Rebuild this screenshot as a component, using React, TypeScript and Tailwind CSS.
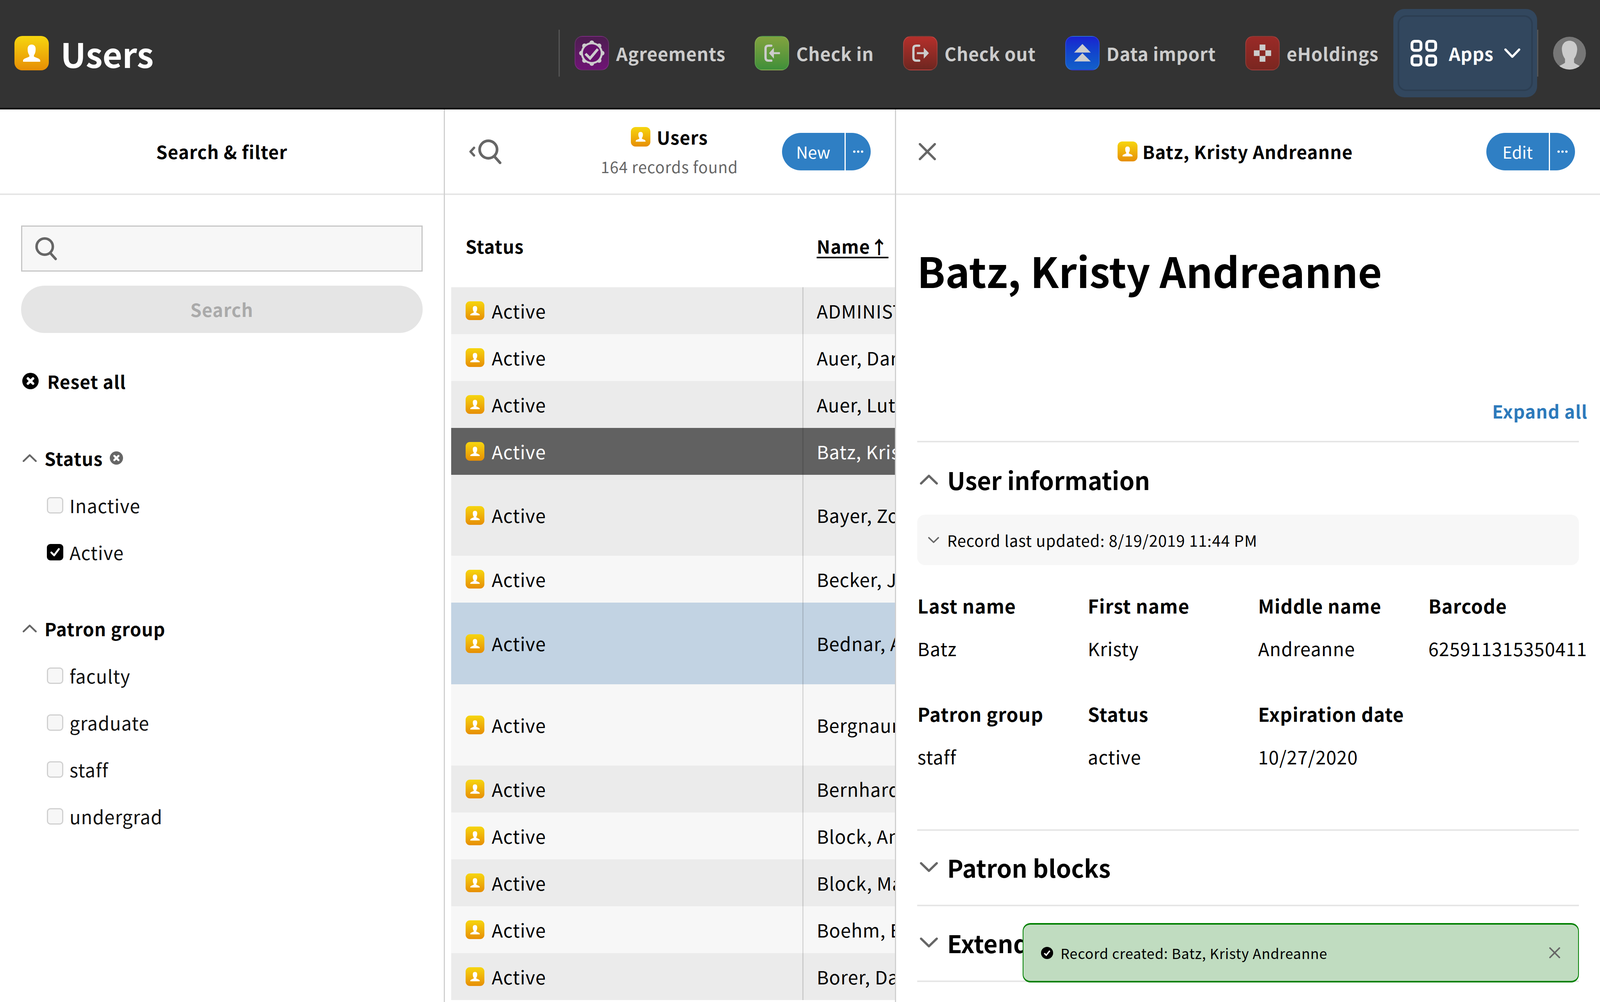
import type { ReactNode } from "react";

const rows = [
  { name: "ADMINISTRATOR, Diku", h: "h-[120px]", bg: "bg-[#ebebeb]" },
  { name: "Auer, Darian", h: "h-[120px]", bg: "bg-[#f7f7f7]" },
  { name: "Auer, Lutz", h: "h-[120px]", bg: "bg-[#ebebeb]" },
  { name: "Batz, Kristy Andreanne", h: "h-[120px]", bg: "bg-[#616161]", dark: true },
  { name: "Bayer, Zoe", h: "h-[207px]", bg: "bg-[#ebebeb]" },
  { name: "Becker, Jena", h: "h-[120px]", bg: "bg-[#f7f7f7]" },
  { name: "Bednar, Amy", h: "h-[209px]", bg: "bg-[#c2d3e3]" },
  { name: "Bergnaum, Lia", h: "h-[208px]", bg: "bg-[#f7f7f7]" },
  { name: "Bernhard, Ivy", h: "h-[120px]", bg: "bg-[#ebebeb]" },
  { name: "Block, Anna", h: "h-[120px]", bg: "bg-[#f7f7f7]" },
  { name: "Block, Mary", h: "h-[120px]", bg: "bg-[#ebebeb]" },
  { name: "Boehm, Eve", h: "h-[120px]", bg: "bg-[#f7f7f7]" },
  { name: "Borer, Dale", h: "h-[120px]", bg: "bg-[#ebebeb]" },
];

function AppTile({ className, children }: { className: string; children: ReactNode }) {
  return (
    <div className={`h-[88px] w-[88px] shrink-0 overflow-hidden rounded-[20px] border-2 border-white/10 ${className}`}>
      <svg viewBox="3 3 114 114" className="h-full w-full">
        {children}
      </svg>
    </div>
  );
}

function UserIcon({ size = "h-[48px] w-[48px] rounded-[11px]" }: { size?: string }) {
  return (
    <div className={`shrink-0 bg-linear-to-b from-[#f6d60f] to-[#e68e05] ${size}`}>
      <svg viewBox="0 0 120 120" className="h-full w-full">
        <path
          d="M60 30C50 30 46 37 46 46C46 55 48 62 52 67L52 72C46 76 32 78 30 85L30 90L90 90L90 85C88 78 74 76 68 72L68 67C72 62 74 55 74 46C74 37 70 30 60 30Z"
          fill="#fff"
        />
      </svg>
    </div>
  );
}

function SearchGlyph({ className }: { className: string }) {
  return (
    <svg viewBox="0 0 78 82" className={className} fill="none" stroke="#666" strokeWidth="9" strokeLinecap="round">
      <circle cx="34" cy="34" r="29" />
      <path d="M54 57L73 78" />
    </svg>
  );
}

function Chevron({ up, className }: { up?: boolean; className: string }) {
  return (
    <svg viewBox="0 0 64 36" className={className} fill="none" stroke="#666" strokeWidth="8" strokeLinecap="round" strokeLinejoin="round">
      <path d={up ? "M4 32L32 5L60 32" : "M4 4L32 31L60 4"} />
    </svg>
  );
}

function CloseGlyph({ className }: { className: string }) {
  return (
    <svg viewBox="0 0 60 60" className={className} fill="none" stroke="#666" strokeWidth="8" strokeLinecap="round">
      <path d="M4 4L56 56M56 4L4 56" />
    </svg>
  );
}

function ClearCircle({ className, color }: { className: string; color: string }) {
  return (
    <svg viewBox="0 0 58 58" className={className}>
      <circle cx="29" cy="29" r="29" fill={color} />
      <path d="M20 20L38 38M38 20L20 38" stroke="#fff" strokeWidth="9" strokeLinecap="round" />
    </svg>
  );
}

function Checkbox({ label, checked }: { label: string; checked?: boolean }) {
  return (
    <div className="flex h-[120px] items-center pl-[120px]">
      {checked ? (
        <div className="flex h-[42px] w-[42px] items-center justify-center rounded-[9px] bg-black">
          <svg viewBox="0 0 40 40" className="h-[32px] w-[32px]" fill="none" stroke="#fff" strokeWidth="6" strokeLinecap="round" strokeLinejoin="round">
            <path d="M8 21L17 30L32 10" />
          </svg>
        </div>
      ) : (
        <div className="h-[42px] w-[42px] rounded-[9px] border-[3px] border-[#d0d0d0] bg-[#f7f7f7]" />
      )}
      <span className="ml-[16px] text-[47px] tracking-[1px] text-[#111]">{label}</span>
    </div>
  );
}

function SplitButton({ label }: { label: string }) {
  return (
    <div className="flex h-[96px] shrink-0 text-white">
      <div className="flex w-[160px] items-center justify-center rounded-l-[48px] bg-[#2f7fc4] text-[42px]">{label}</div>
      <div className="ml-[3px] flex w-[64px] items-center justify-center gap-[4px] rounded-r-[48px] bg-[#2f7fc4]">
        <i className="h-[6px] w-[6px] rounded-full bg-white" />
        <i className="h-[6px] w-[6px] rounded-full bg-white" />
        <i className="h-[6px] w-[6px] rounded-full bg-white" />
      </div>
    </div>
  );
}

function NavItem({ tile, label }: { tile: ReactNode; label: string }) {
  return (
    <div className="flex items-center gap-[18px]">
      {tile}
      <span className="text-[46px] font-bold tracking-[.8px] text-[#cccccc]">{label}</span>
    </div>
  );
}

function Field({ label, value }: { label: string; value: string }) {
  return (
    <div>
      <div className="text-[48px] leading-[80px] font-bold tracking-[1px]">{label}</div>
      <div className="mt-[30px] text-[47px] leading-[80px] tracking-[1px]">{value}</div>
    </div>
  );
}

function Accordion({ title, open }: { title: string; open?: boolean }) {
  return (
    <div className="flex h-[96px] items-center pl-[7px]">
      <Chevron up={open} className="h-[32px] w-[46px]" />
      <span className="ml-[24px] text-[62px] font-bold">{title}</span>
    </div>
  );
}

export default function App() {
  return (
    <div className="flex h-[2564px] w-full flex-col overflow-hidden bg-white font-['Noto_Sans_CJK_SC','Noto_Sans',sans-serif] text-black">
      <header className="flex h-[280px] shrink-0 items-center border-b-4 border-black bg-[#333333] pr-[36px] pb-[4px] pl-[37px]">
        <UserIcon size="h-[88px] w-[88px] rounded-[20px]" />
        <span className="ml-[30px] text-[87px] font-bold text-white">Users</span>
        <div className="ml-auto flex items-center">
          <div className="h-[120px] w-[3px] bg-[#555]" />
          <div className="ml-[38px] flex items-center gap-[75px]">
            <NavItem
              label="Agreements"
              tile={
                <AppTile className="bg-linear-to-b from-[#4d1c50] to-[#6f1375]">
                  <circle cx="60" cy="60" r="38" fill="#ccc" />
                  {[0, 45, 90, 135, 180, 225, 270, 315].map((a) => (
                    <circle
                      key={a}
                      cx={60 + 36 * Math.cos((a * Math.PI) / 180)}
                      cy={60 + 36 * Math.sin((a * Math.PI) / 180)}
                      r="8"
                      fill="#ccc"
                    />
                  ))}
                  <circle cx="60" cy="60" r="31" fill="#66116c" />
                  <path d="M38 62L54 78L81 46" fill="none" stroke="#ccc" strokeWidth="9" />
                </AppTile>
              }
            />
            <NavItem
              label="Check in"
              tile={
                <AppTile className="bg-linear-to-b from-[#81a33f] to-[#3e8f39]">
                  <path d="M58 34L48 34Q38 34 38 44L38 76Q38 86 48 86L58 86" fill="none" stroke="#ccc" strokeWidth="8" strokeLinecap="round" />
                  <path d="M50 60L67 41L67 79Z" fill="#ccc" />
                  <path d="M65 60L88 60" stroke="#ccc" strokeWidth="7" />
                </AppTile>
              }
            />
            <NavItem
              label="Check out"
              tile={
                <AppTile className="bg-linear-to-b from-[#b52f2b] to-[#6e2620]">
                  <path d="M56 34L46 34Q36 34 36 44L36 76Q36 86 46 86L56 86" fill="none" stroke="#ccc" strokeWidth="8" strokeLinecap="round" />
                  <path d="M90 60L72 41L72 79Z" fill="#ccc" />
                  <path d="M48 60L74 60" stroke="#ccc" strokeWidth="7" />
                </AppTile>
              }
            />
            <NavItem
              label="Data import"
              tile={
                <AppTile className="bg-linear-to-b from-[#1a1fd0] to-[#1560c8]">
                  <path d="M60 28L89 58L31 58Z" fill="#ccc" />
                  <path d="M60 60L89 89L31 89Z" fill="#ccc" />
                </AppTile>
              }
            />
            <NavItem
              label="eHoldings"
              tile={
                <AppTile className="bg-linear-to-b from-[#9a2a27] to-[#7a2620]">
                  <path d="M50 30H70V50H90V70H70V90H50V70H30V50H50ZM50 50V70H70V50Z" fill="#ccc" fillRule="evenodd" />
                </AppTile>
              }
            />
          </div>
          <div className="ml-[38px] flex h-[226px] w-[368px] items-center rounded-[28px] bg-[#32475e] px-[11px] py-[16px]">
            <div className="flex h-full w-full items-center rounded-[22px] border-4 border-[#2c3e52] pl-[29px]">
              <svg viewBox="0 0 94 94" className="h-[68px] w-[68px]" fill="none" stroke="#fff" strokeWidth="10">
                <rect x="5" y="5" width="32" height="32" rx="9" />
                <rect x="57" y="5" width="32" height="32" rx="9" />
                <rect x="5" y="57" width="32" height="32" rx="9" />
                <rect x="57" y="57" width="32" height="32" rx="9" />
              </svg>
              <span className="ml-[30px] text-[46px] font-bold tracking-[.8px] text-white">Apps</span>
              <svg viewBox="0 0 58 34" className="ml-[28px] h-[24px] w-[41px]" fill="none" stroke="#fff" strokeWidth="8" strokeLinecap="round" strokeLinejoin="round">
                <path d="M4 4L29 30L54 4" />
              </svg>
            </div>
          </div>
          <div className="h-[120px] w-[3px] bg-[#555]" />
          <svg viewBox="0 0 116 116" className="ml-[38px] h-[84px] w-[84px]">
            <defs>
              <clipPath id="avatar">
                <circle cx="58" cy="58" r="58" />
              </clipPath>
            </defs>
            <circle cx="58" cy="58" r="58" fill="#777" />
            <path
              clipPath="url(#avatar)"
              d="M58 14C40 14 30 28 31 46C32 60 36 70 42 78L42 92C32 100 12 104 10 120L106 120C104 104 84 100 74 92L74 78C80 70 84 60 85 46C86 28 76 14 58 14Z"
              fill="#cbcbcb"
            />
          </svg>
        </div>
      </header>

      <main className="flex min-h-0 flex-1">
        <section className="w-[27.8%] shrink-0 border-r-[3px] border-[#d0d0d0]">
          <div className="flex h-[219px] items-center justify-center border-b-4 border-[#e6e6e6] text-[46px] font-bold tracking-[1px]">
            Search &amp; filter
          </div>
          <div className="px-[54px] pt-[78px]">
            <div className="flex h-[118px] items-center border-[3px] border-[#c6c6c6] bg-[#f7f7f7] pl-[33px]">
              <SearchGlyph className="h-[60px] w-[56px]" />
            </div>
            <div className="mt-[36px] flex h-[121px] items-center justify-center rounded-[60px] bg-[#e5e5e5] text-[46px] font-bold tracking-[1px] text-[#aaaaaa]">
              Search
            </div>
            <div className="mt-[93px] flex h-[60px] items-center pl-[3px]">
              <ClearCircle className="h-[42px] w-[42px]" color="#000" />
              <span className="ml-[22px] text-[46px] font-bold tracking-[1px]">Reset all</span>
            </div>
          </div>
          <div className="mt-[132px] flex h-[70px] items-center pl-[58px]">
            <Chevron up className="h-[22px] w-[36px]" />
            <span className="ml-[20px] text-[46px] font-bold tracking-[1px]">Status</span>
            <ClearCircle className="ml-[18px] h-[34px] w-[34px]" color="#666" />
          </div>
          <div className="mt-[26px]">
            <Checkbox label="Inactive" />
            <Checkbox label="Active" checked />
          </div>
          <div className="mt-[100px] flex h-[70px] items-center pl-[58px]">
            <Chevron up className="h-[22px] w-[36px]" />
            <span className="ml-[20px] text-[46px] font-bold tracking-[1px]">Patron group</span>
          </div>
          <div className="mt-[26px]">
            <Checkbox label="faculty" />
            <Checkbox label="graduate" />
            <Checkbox label="staff" />
            <Checkbox label="undergrad" />
          </div>
        </section>

        <section className="flex w-[28.2%] shrink-0 flex-col overflow-hidden border-r-[3px] border-[#d0d0d0]">
          <div className="flex h-[219px] shrink-0 items-center border-b-4 border-[#e6e6e6] pr-[62px] pl-[61px]">
            <svg viewBox="0 0 24 34" className="h-[30px] w-[18px]" fill="none" stroke="#666" strokeWidth="8" strokeLinecap="round" strokeLinejoin="round">
              <path d="M18 4L6 17L18 30" />
            </svg>
            <SearchGlyph className="ml-[6px] h-[78px] w-[60px]" />
            <div className="ml-[142px] flex flex-1 flex-col items-center">
              <div className="flex items-center gap-[16px]">
                <UserIcon size="h-[50px] w-[50px] rounded-[12px]" />
                <span className="text-[46px] leading-[76px] font-bold tracking-[1px]">Users</span>
              </div>
              <span className="text-[40px] leading-[76px] tracking-[1px] text-[#666]">164 records found</span>
            </div>
            <SplitButton label="New" />
          </div>
          <div className="flex h-[236px] shrink-0 items-center pt-[24px] text-[46px] font-bold tracking-[1px]">
            <span className="w-[952px] pl-[53px]">Status</span>
            <span className="underline decoration-4 underline-offset-[8px]">Name↑</span>
          </div>
          <div className="ml-[16px] flex flex-col">
            {rows.map((r) => (
              <div key={r.name} className={`flex shrink-0 items-center ${r.h} ${r.bg} ${r.dark ? "text-white" : ""}`}>
                <div className="flex h-full w-[902px] shrink-0 items-center border-r-[3px] border-[#00000022] pl-[37px]">
                  <UserIcon />
                  <span className="ml-[19px] text-[47px] tracking-[1px]">Active</span>
                </div>
                <span className="pl-[34px] text-[47px] tracking-[1px] whitespace-nowrap">{r.name}</span>
              </div>
            ))}
          </div>
        </section>

        <section className="relative min-w-0 flex-1">
          <div className="flex h-[219px] items-center border-b-4 border-[#e6e6e6] pr-[64px] pl-[58px]">
            <CloseGlyph className="h-[44px] w-[44px]" />
            <div className="ml-[123px] flex flex-1 items-center justify-center gap-[13px]">
              <UserIcon size="h-[51px] w-[51px] rounded-[12px]" />
              <span className="text-[46px] font-bold tracking-[1px]">Batz, Kristy Andreanne</span>
            </div>
            <SplitButton label="Edit" />
          </div>
          <div className="pr-[54px] pl-[54px]">
            <h1 className="mt-[92px] text-[106px] leading-[200px] font-bold">Batz, Kristy Andreanne</h1>
            <div className="mt-[220px] -mr-[22px] text-right text-[46px] leading-[80px] font-bold tracking-[1px] text-[#2d7abb]">Expand all</div>
            <div className="mt-[37px] border-t-4 border-[#e6e6e6] pt-[47px]">
              <Accordion title="User information" open />
            </div>
            <div className="mt-[42px] flex h-[129px] items-center rounded-[20px] bg-[#f7f7f7] pl-[28px]">
              <Chevron className="h-[18px] w-[28px]" />
              <span className="ml-[21px] text-[40px] tracking-[1px]">Record last updated: 8/19/2019 11:44 PM</span>
            </div>
            <div className="mt-[63px] grid grid-cols-[436px_436px_436px_auto] gap-y-[87px] pl-[1px] whitespace-nowrap">
              <Field label="Last name" value="Batz" />
              <Field label="First name" value="Kristy" />
              <Field label="Middle name" value="Andreanne" />
              <Field label="Barcode" value="625911315350411" />
              <Field label="Patron group" value="staff" />
              <Field label="Status" value="active" />
              <Field label="Expiration date" value="10/27/2020" />
            </div>
            <div className="mt-[146px] border-t-4 border-[#e6e6e6] pt-[45px]">
              <Accordion title="Patron blocks" />
            </div>
            <div className="mt-[48px] border-t-4 border-[#e6e6e6] pt-[45px]">
              <Accordion title="Extended information" />
            </div>
            <div className="mt-[49px] border-t-4 border-[#e6e6e6]" />
          </div>
          <div className="absolute top-[2082px] right-[54px] flex h-[152px] w-[1424px] items-center rounded-[20px] border-x-2 border-y-4 border-[#008000] bg-[#c0dcc0] pr-[46px] pl-[45px]">
            <svg viewBox="0 0 44 44" className="h-[31px] w-[31px]">
              <circle cx="22" cy="22" r="22" fill="#000" />
              <path d="M12 23L19 30L32 14" fill="none" stroke="#fff" strokeWidth="5" />
            </svg>
            <span className="ml-[19px] text-[36px] tracking-[.9px]">Record created: Batz, Kristy Andreanne</span>
            <CloseGlyph className="ml-auto h-[28px] w-[28px]" />
          </div>
        </section>
      </main>
    </div>
  );
}
